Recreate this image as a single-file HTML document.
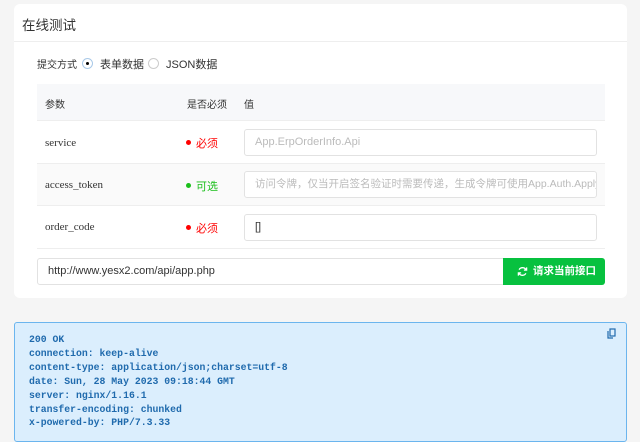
<!DOCTYPE html>
<html><head><meta charset="utf-8"><style>
*{box-sizing:border-box;margin:0;padding:0}
body{width:640px;height:438px;overflow:hidden;background:#f5f5f5;font-family:"Liberation Sans","Noto Sans CJK SC",sans-serif;position:relative;color:#333}
.card{position:absolute;left:14px;top:4px;width:613px;height:294px;background:#fff;border-radius:6px}
.abs{position:absolute}
.hdr{left:22px;top:14px;font-size:13.5px;color:#333}
.div{left:14px;top:41px;width:613px;height:1px;background:#eee}
.f12{font-size:11px}
.radio{width:11px;height:11px;border-radius:50%;border:1px solid #ccc;background:#fff}
.radio.on::after{content:"";position:absolute;left:3px;top:3px;width:3px;height:3px;border-radius:50%;background:#000}
.row{left:37px;width:568px;border-bottom:1px solid #eee}
.serif{font-family:"Liberation Serif",serif;font-size:11px;color:#333}
.inp{left:244px;width:353px;height:27px;border:1px solid #e2e2e2;border-radius:3px;background:#fff;font-size:11px;color:#bbb;padding:0 10px;line-height:25px;white-space:nowrap;overflow:hidden}
.dot{width:5px;height:5px;border-radius:50%}
.resp{left:14px;top:322px;width:613px;height:120px;background:#dbeefd;border:1px solid #6bb5ee;border-radius:3px}
pre{position:absolute;left:29px;top:333px;font-family:"Liberation Mono",monospace;font-size:9.8px;line-height:13.9px;color:#1f6aad;font-weight:bold}
</style></head><body>
<div class="card"></div>
<div class="abs hdr">在线测试</div>
<div class="abs div"></div>
<div class="abs f12" style="left:37px;top:56px;font-size:10px">提交方式</div>
<div class="abs radio on" style="left:82px;top:58px;border-color:#a9c9e8"></div>
<div class="abs f12" style="left:100px;top:56px">表单数据</div>
<div class="abs radio" style="left:148px;top:58px"></div>
<div class="abs f12" style="left:166px;top:56px">JSON数据</div>

<div class="abs row" style="top:84px;height:37px;background:#f7f8fa"></div>
<div class="abs" style="left:45px;top:96px;font-size:10px">参数</div>
<div class="abs" style="left:187px;top:96px;font-size:10px">是否必须</div>
<div class="abs" style="left:244px;top:96px;font-size:10px">值</div>

<div class="abs row" style="top:121px;height:43px"></div>
<div class="abs serif" style="left:45px;top:137px">service</div>
<div class="abs dot" style="left:186px;top:140px;background:#f00"></div>
<div class="abs f12" style="left:196px;top:135px;color:#f00">必须</div>
<div class="abs inp" style="top:129px">App.ErpOrderInfo.Api</div>

<div class="abs row" style="top:164px;height:42px;background:#fafafa"></div>
<div class="abs serif" style="left:45px;top:179px">access_token</div>
<div class="abs dot" style="left:186px;top:183px;background:#1bbf1b"></div>
<div class="abs f12" style="left:196px;top:178px;color:#1bbf1b">可选</div>
<div class="abs inp" style="top:171px;font-size:10.5px">访问令牌，仅当开启签名验证时需要传递，生成令牌可使用App.Auth.ApplyToken</div>

<div class="abs row" style="top:206px;height:43px"></div>
<div class="abs serif" style="left:45px;top:221px">order_code</div>
<div class="abs dot" style="left:186px;top:225px;background:#f00"></div>
<div class="abs f12" style="left:196px;top:220px;color:#f00">必须</div>
<div class="abs inp" style="top:214px;color:#333">[]</div>

<div class="abs" style="left:37px;top:258px;width:467px;height:27px;border:1px solid #e2e2e2;border-radius:3px 0 0 3px;font-size:11px;padding:0 10px;line-height:25px">http://www.yesx2.com/api/app.php</div>
<div class="abs" style="left:503px;top:258px;width:102px;height:27px;background:#07c13f;border-radius:0 3px 3px 0;color:#fff;font-size:10.5px;font-weight:bold;padding:0 0 0 30px;line-height:27px">请求当前接口</div>
<svg class="abs" style="left:517px;top:266px" width="11" height="11" viewBox="0 0 12 12" fill="none" stroke="#fff" stroke-width="1.4"><path d="M10 4.5A4.3 4.3 0 0 0 2.3 4M2 7.5A4.3 4.3 0 0 0 9.7 8"/><path d="M10.5 1.5v3h-3M1.5 10.5v-3h3"/></svg>

<div class="abs resp"></div>
<svg class="abs" style="left:607px;top:328px" width="9" height="11" viewBox="0 0 9 11" fill="none" stroke="#1f6aad" stroke-width="1.2"><rect x="3" y="1" width="5" height="7"/><path d="M1 3v7h5"/></svg>
<pre>200 OK
connection: keep-alive
content-type: application/json;charset=utf-8
date: Sun, 28 May 2023 09:18:44 GMT
server: nginx/1.16.1
transfer-encoding: chunked
x-powered-by: PHP/7.3.33</pre>
</body></html>
